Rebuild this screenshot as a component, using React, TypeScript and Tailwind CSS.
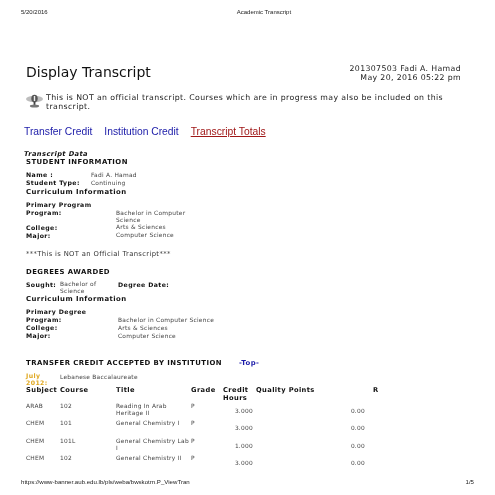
const font = { fontFamily: '"DejaVu Sans", Verdana, sans-serif' };

const courses = [
  { subject: "ARAB", course: "102", title: "Reading In Arab Heritage II", credit: "3.000" },
  { subject: "CHEM", course: "101", title: "General Chemistry I", credit: "3.000" },
  { subject: "CHEM", course: "101L", title: "General Chemistry Lab I", credit: "1.000" },
  { subject: "CHEM", course: "102", title: "General Chemistry II", credit: "3.000" },
];

const Label = ({ children }: { children: React.ReactNode }) => (
  <div className="font-bold text-[6.2px] tracking-[0.4px] leading-[8px] text-[#111]">{children}</div>
);

const HeadCell = ({ children }: { children: React.ReactNode }) => (
  <div className="font-bold text-[6.7px] tracking-[0.4px] leading-[7.5px] text-[#111]">{children}</div>
);

const Value = ({ children }: { children: React.ReactNode }) => (
  <div className="text-[5.9px] tracking-[0.25px] leading-[7px] pt-[0.5px] text-[#444]">{children}</div>
);

const Heading = ({ children }: { children: React.ReactNode }) => (
  <div className="font-bold text-[6.9px] tracking-[0.45px] leading-[9px] text-[#111] whitespace-nowrap">
    {children}
  </div>
);

const InfoIcon = () => (
  <svg width="17" height="14" viewBox="0 0 17 14" className="shrink-0">
    <ellipse cx="8.5" cy="5" rx="8.5" ry="3.2" fill="#bdbdbd" />
    <ellipse cx="8.5" cy="4.6" rx="3.2" ry="3.8" fill="#555" />
    <rect x="7.8" y="2" width="1.4" height="5" fill="#eee" />
    <rect x="7.6" y="8" width="1.8" height="3" fill="#444" />
    <ellipse cx="8.5" cy="12" rx="4.6" ry="1.5" fill="#777" />
  </svg>
);

const App = () => {
  return (
    <div className="w-[495px] h-[495px] overflow-hidden bg-white flex flex-col blur-[0.3px]" style={font}>
      <div
        className="flex gap-[189px] px-[21px] pt-[8px] text-[6px] leading-[8px] text-[#222] h-[56px]"
        style={{ fontFamily: '"Liberation Sans", Arial, sans-serif' }}
      >
        <div>5/20/2016</div>
        <div>Academic Transcript</div>
      </div>

      <div className="flex justify-between pl-[26px] pr-[34px] h-[26px]">
        <h1 className="text-[14px] leading-[19px] pt-[7px] text-[#111]">Display Transcript</h1>
        <div className="text-right text-[7.8px] tracking-[0.35px] leading-[9px] pt-[7.5px] text-[#222]">
          <div>201307503 Fadi A. Hamad</div>
          <div>May 20, 2016 05:22 pm</div>
        </div>
      </div>

      <div className="flex items-start gap-[3px] pl-[26px] pr-[40px] pt-[12px]">
        <InfoIcon />
        <p className="text-[7.8px] tracking-[0.38px] leading-[8.5px] text-[#222]">
          This is NOT an official transcript. Courses which are in progress may also be included on this
          transcript.
        </p>
      </div>

      <div
        className="flex gap-[12px] pl-[24px] pt-[15px] text-[10.3px] leading-[12px] text-[#1a1aa8]"
        style={{ fontFamily: '"Liberation Sans", Arial, sans-serif' }}
      >
        <a>Transfer Credit</a>
        <a>Institution Credit</a>
        <a className="text-[#a01818] underline">Transcript Totals</a>
      </div>

      <div className="pl-[24px] pt-[13px] font-bold italic text-[6.7px] tracking-[0.4px] leading-[7px] text-[#111]">
        Transcript Data
      </div>

      <div className="pl-[26px] flex flex-col">
        <Heading>STUDENT INFORMATION</Heading>
        <div className="grid grid-cols-[65px_1fr] pt-[4px] pb-[1px]">
          <Label>Name :</Label>
          <Value>Fadi A. Hamad</Value>
          <Label>Student Type:</Label>
          <Value>Continuing</Value>
        </div>
        <Heading>Curriculum Information</Heading>
        <div className="pt-[4px]">
          <Label>Primary Program</Label>
        </div>
        <div className="grid grid-cols-[90px_80px]">
          <Label>Program:</Label>
          <Value>Bachelor in Computer Science</Value>
          <Label>College:</Label>
          <Value>Arts &amp; Sciences</Value>
          <Label>Major:</Label>
          <Value>Computer Science</Value>
        </div>

        <div className="pt-[10px] text-[6.8px] tracking-[0.35px] leading-[8px] text-[#333]">
          ***This is NOT an Official Transcript***
        </div>

        <div className="pt-[10px]">
          <Heading>DEGREES AWARDED</Heading>
        </div>
        <div className="grid grid-cols-[34px_58px_1fr] pt-[4px]">
          <Label>Sought:</Label>
          <Value>Bachelor of Science</Value>
          <Label>Degree Date:</Label>
        </div>
        <Heading>Curriculum Information</Heading>
        <div className="pt-[4px]">
          <Label>Primary Degree</Label>
        </div>
        <div className="grid grid-cols-[92px_1fr]">
          <Label>Program:</Label>
          <Value>Bachelor in Computer Science</Value>
          <Label>College:</Label>
          <Value>Arts &amp; Sciences</Value>
          <Label>Major:</Label>
          <Value>Computer Science</Value>
        </div>

        <div className="flex gap-[17px] pt-[19px]">
          <Heading>TRANSFER CREDIT ACCEPTED BY INSTITUTION</Heading>
          <a className="font-bold text-[6.9px] tracking-[0.45px] leading-[9px] text-[#1a1aa8]">-Top-</a>
        </div>

        <div className="grid grid-cols-[34px_1fr] pt-[5px] pb-[1px]">
          <div className="font-bold text-[6.2px] tracking-[0.4px] leading-[6.5px] text-[#e0a820]">
            July
            <br />
            2012:
          </div>
          <Value>Lebanese Baccalaureate</Value>
        </div>

        <div className="grid grid-cols-[34px_56px_75px_32px_32px_115px_20px]">
          <HeadCell>Subject</HeadCell>
          <HeadCell>Course</HeadCell>
          <HeadCell>Title</HeadCell>
          <HeadCell>Grade</HeadCell>
          <HeadCell>Credit Hours</HeadCell>
          <div className="pl-[1px]">
            <HeadCell>Quality Points</HeadCell>
          </div>
          <div className="pl-[3px]">
            <HeadCell>R</HeadCell>
          </div>
          {courses.map((c) => (
            <div key={c.subject + c.course} className="col-span-7 grid grid-cols-subgrid h-[17.5px] first:mt-[1px]">
              <Value>{c.subject}</Value>
              <Value>{c.course}</Value>
              <Value>{c.title}</Value>
              <Value>P</Value>
              <div className="text-right pt-[5px] pr-[2px]">
                <Value>{c.credit}</Value>
              </div>
              <div className="text-right pt-[5px] pr-[5px]">
                <Value>0.00</Value>
              </div>
              <div />
            </div>
          ))}
        </div>
      </div>

      <div
        className="mt-auto flex justify-between pl-[21px] pr-[21px] pb-[9px] text-[6.1px] leading-[8px] text-[#222]"
        style={{ fontFamily: '"Liberation Sans", Arial, sans-serif' }}
      >
        <div>https://www-banner.aub.edu.lb/pls/weba/bwskotrn.P_ViewTran</div>
        <div>1/5</div>
      </div>
    </div>
  );
};

export default App;
